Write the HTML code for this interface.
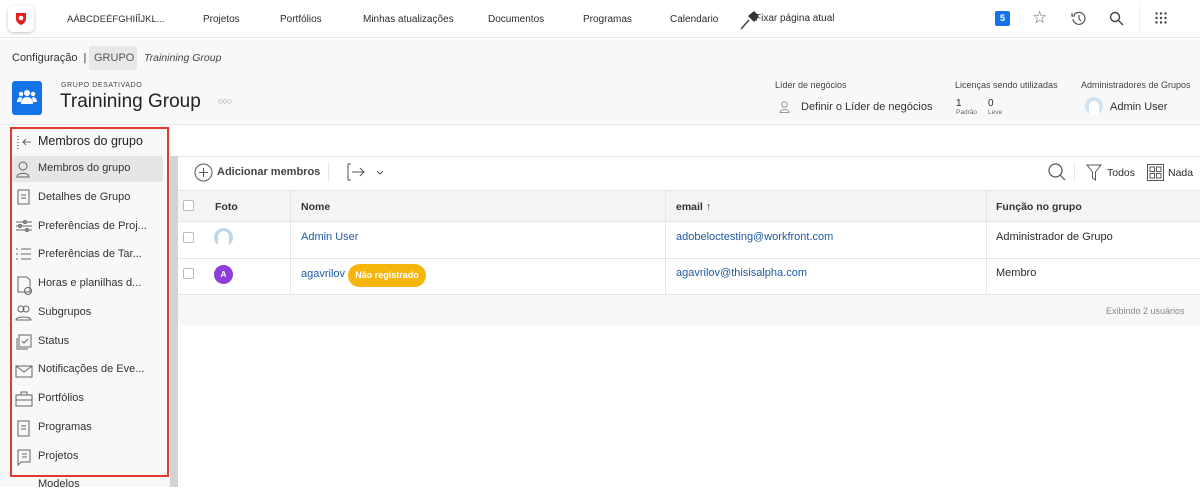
<!DOCTYPE html>
<html><head><meta charset="utf-8"><style>
*{box-sizing:border-box;margin:0;padding:0}
body{width:1200px;height:487px;overflow:hidden;background:#fff;font-family:"Liberation Sans",sans-serif;color:#2c2c2c;position:relative}
.a{position:absolute;white-space:nowrap}
.nav{top:0;left:0;width:1200px;height:38px;background:#fff;border-bottom:1px solid #e3e3e3}
.nav .t{font-size:10px;top:14px;color:#2c2c2c}
.hdr{top:39px;left:0;width:1200px;height:86px;background:#f8f8f8;border-bottom:1px solid #e6e6e6}
.side{top:126px;left:0;width:170px;height:361px;background:#f8f8f8}
.scroll{top:156px;left:170px;width:8px;height:331px;background:#d3d3d3}
.red{top:127px;left:10px;width:159px;height:350px;border:2px solid #e03a2e}
.mi{left:38px;font-size:11px;color:#333}
.ic{left:16px;width:16px;height:16px}
.th{font-size:10.5px;font-weight:bold;color:#333;top:201px}
.lnk{color:#1f5aa6;font-size:11px}
.cb{width:11px;height:11px;border:1px solid #bbb;border-radius:2px;background:#fff}
</style></head><body>
<div class="a nav"></div>
<div class="a" style="left:8px;top:6px;width:26px;height:26px;border-radius:5px;background:#fff;box-shadow:0 1px 3px rgba(0,0,0,.25)"></div>
<svg class="a" style="left:15px;top:12px" width="12" height="13" viewBox="0 0 12 13"><path d="M1 1h10v6c0 3-3 5-5 6C4 12 1 10 1 7z" fill="#e3201b"/><circle cx="6" cy="6" r="2.3" fill="#fff"/></svg>
<div class="a t nav" style="display:none"></div>
<div class="a" style="left:67px;top:14px;font-size:9.5px">AÁBCDEÉFGHIÍÎJKL...</div>
<div class="a" style="left:203px;top:14px;font-size:10px">Projetos</div>
<div class="a" style="left:280px;top:14px;font-size:10px">Portfólios</div>
<div class="a" style="left:363px;top:14px;font-size:10px">Minhas atualizações</div>
<div class="a" style="left:488px;top:14px;font-size:10px">Documentos</div>
<div class="a" style="left:583px;top:14px;font-size:10px">Programas</div>
<div class="a" style="left:670px;top:14px;font-size:10px">Calendario</div>
<svg class="a" style="left:740px;top:10px" width="20" height="20" viewBox="0 0 20 20"><path d="M1 19L9 10" stroke="#444" stroke-width="1.5"/><path d="M8 6l6-5 5 5-5 6z" fill="#333"/></svg>
<div class="a" style="left:755px;top:13px;font-size:10px">Fixar página atual</div>
<div class="a" style="left:995px;top:11px;width:15px;height:15px;background:#1473e6;color:#fff;font-size:9px;font-weight:bold;text-align:center;line-height:15px;border-radius:2px">5</div>
<div class="a" style="left:1032px;top:8px;font-size:17px;color:#666">☆</div>
<svg class="a" style="left:1071px;top:11px" width="16" height="16" viewBox="0 0 16 16" fill="none" stroke="#555" stroke-width="1.2"><path d="M3 4A6 6 0 1 1 2 8"/><path d="M8 4v4l2 2"/><path d="M1 2v3h3"/></svg>
<svg class="a" style="left:1109px;top:11px" width="15" height="15" viewBox="0 0 15 15" fill="none" stroke="#444" stroke-width="1.4"><circle cx="6" cy="6" r="4.5"/><path d="M9.5 9.5L14 14"/></svg>
<div class="a" style="left:1139px;top:6px;width:1px;height:26px;background:#eee"></div>
<svg class="a" style="left:1155px;top:12px" width="12" height="12"><g fill="#444"><circle cx="1.5" cy="1.5" r="1.2"/><circle cx="6" cy="1.5" r="1.2"/><circle cx="10.5" cy="1.5" r="1.2"/><circle cx="1.5" cy="6" r="1.2"/><circle cx="6" cy="6" r="1.2"/><circle cx="10.5" cy="6" r="1.2"/><circle cx="1.5" cy="10.5" r="1.2"/><circle cx="6" cy="10.5" r="1.2"/><circle cx="10.5" cy="10.5" r="1.2"/></g></svg>

<div class="a hdr"></div>
<div class="a" style="left:12px;top:52px;font-size:11px;color:#333">Configuração &nbsp;|</div>
<div class="a" style="left:89px;top:46px;width:48px;height:24px;background:#e8e8e8;border-radius:2px"></div>
<div class="a" style="left:94px;top:52px;font-size:11px;color:#555">GRUPO</div>
<div class="a" style="left:144px;top:52px;font-size:10.5px;font-style:italic;color:#444">Trainining Group</div>
<div class="a" style="left:12px;top:81px;width:30px;height:34px;background:#1473e6;border-radius:3px"></div>
<svg class="a" style="left:17px;top:89px" width="20" height="16" viewBox="0 0 20 16" fill="#fff"><circle cx="10" cy="4" r="3"/><circle cx="4" cy="5" r="2.2"/><circle cx="16" cy="5" r="2.2"/><path d="M4 15c0-5 3-7 6-7s6 2 6 7z"/><path d="M0 13c0-3 2-5 4-5l1 1-1 4z"/><path d="M20 13c0-3-2-5-4-5l-1 1 1 4z"/></svg>
<div class="a" style="left:61px;top:82px;font-size:7px;letter-spacing:.6px;color:#444">GRUPO DESATIVADO</div>
<div class="a" style="left:60px;top:91px;font-size:19px;color:#222">Trainining Group</div>
<div class="a" style="left:218px;top:96px;font-size:9px;color:#888;letter-spacing:-1px">○○○</div>
<div class="a" style="left:775px;top:80px;font-size:9px;color:#444">Líder de negócios</div>
<svg class="a" style="left:779px;top:101px" width="11" height="12" fill="none" stroke="#999"><circle cx="5.5" cy="3.5" r="2.8"/><path d="M1 11.5c0-4 9-4 9 0z"/></svg>
<div class="a" style="left:801px;top:101px;font-size:11px;color:#333">Definir o Líder de negócios</div>
<div class="a" style="left:955px;top:80px;font-size:9px;color:#444">Licenças sendo utilizadas</div>
<div class="a" style="left:956px;top:98px;font-size:10px">1</div>
<div class="a" style="left:988px;top:98px;font-size:10px">0</div>
<div class="a" style="left:956px;top:109px;font-size:6.5px;color:#666">Padrão</div>
<div class="a" style="left:988px;top:109px;font-size:6.5px;color:#666">Leve</div>
<div class="a" style="left:1081px;top:80px;font-size:9px;color:#444">Administradores de Grupos</div>
<div class="a" style="left:1085px;top:97px;width:18px;height:18px;border-radius:50%;background:#cfe3f3"></div>
<div class="a" style="left:1089px;top:101px;width:10px;height:14px;border-radius:5px 5px 0 0;background:#fff"></div>
<div class="a" style="left:1110px;top:101px;font-size:11px;color:#333">Admin User</div>

<div class="a side"></div>
<div class="a scroll"></div>
<div class="a" style="left:178px;top:156px;width:1022px;height:1px;background:#e6e6e6"></div>
<svg class="a" style="left:16px;top:135px" width="16" height="14" fill="none" stroke="#666"><path d="M2 1v1M2 4v1M2 7v1M2 10v1M2 13v1" stroke-width="1.3"/><path d="M15 7H7M10 4L7 7l3 3"/></svg>
<div class="a" style="left:38px;top:134px;font-size:12.5px;color:#222">Membros do grupo</div>
<div class="a" style="left:12px;top:156px;width:151px;height:26px;background:#e6e6e6;border-radius:3px"></div>
<div class="a mi" style="top:162px">Membros do grupo</div>
<div class="a mi" style="top:191px">Detalhes de Grupo</div>
<div class="a mi" style="top:220px">Preferências de Proj...</div>
<div class="a mi" style="top:248px">Preferências de Tar...</div>
<div class="a mi" style="top:277px">Horas e planilhas d...</div>
<div class="a mi" style="top:306px">Subgrupos</div>
<div class="a mi" style="top:335px">Status</div>
<div class="a mi" style="top:363px">Notificações de Eve...</div>
<div class="a mi" style="top:392px">Portfólios</div>
<div class="a mi" style="top:421px">Programas</div>
<div class="a mi" style="top:450px">Projetos</div>
<div class="a mi" style="top:478px">Modelos</div>
<svg class="a" style="left:15px;top:160px" width="18" height="310" fill="none" stroke="#666" stroke-width="1">
<circle cx="8" cy="6" r="4"/><path d="M2 17c0-5 12-5 12 0z"/>
<rect x="3" y="30" width="11" height="14"/><path d="M6 35h5M6 38h5"/>
<path d="M1 62h16M1 66h16M1 70h16"/><circle cx="10" cy="62" r="1.5"/><circle cx="5" cy="66" r="1.5"/><circle cx="12" cy="70" r="1.5"/>
<path d="M1 89h2M1 94h2M1 99h2M6 89h10M6 94h10M6 99h10"/>
<path d="M3 117h9l3 3v12H3z"/><circle cx="13" cy="131" r="3.5"/>
<circle cx="6" cy="149" r="3"/><circle cx="11" cy="149" r="3"/><path d="M1 160c0-4 15-4 15 0z"/>
<rect x="4" y="175" width="12" height="12"/><path d="M2 178v11h11M7 181l2 2 4-4"/>
<rect x="1" y="206" width="16" height="11"/><path d="M1 206l8 6 8-6"/>
<rect x="1" y="235" width="16" height="11"/><path d="M6 235v-3h6v3M1 240h16"/>
<rect x="3" y="261" width="11" height="15"/><path d="M6 266h5M6 269h5"/>
<path d="M3 290h12v12H6l-3 3z"/><path d="M7 294h5M7 297h5"/>
</svg>
<div class="a red"></div>

<svg class="a" style="left:194px;top:163px" width="19" height="19" fill="none" stroke="#555"><circle cx="9.5" cy="9.5" r="8.5"/><path d="M9.5 5v9M5 9.5h9"/></svg>
<div class="a" style="left:217px;top:166px;font-size:11px;font-weight:bold;color:#444">Adicionar membros</div>
<div class="a" style="left:328px;top:162px;width:1px;height:20px;background:#e6e6e6"></div>
<svg class="a" style="left:347px;top:163px" width="40" height="18" fill="none" stroke="#555"><path d="M4 1H1v16h3M5 9h12M13 5l4 4-4 4"/><path d="M30 8l3 3 3-3"/></svg>
<svg class="a" style="left:1048px;top:163px" width="18" height="18" fill="none" stroke="#555" stroke-width="1.2"><circle cx="7.5" cy="7.5" r="6.5"/><path d="M12 12l5 5"/></svg>
<div class="a" style="left:1074px;top:162px;width:1px;height:20px;background:#e6e6e6"></div>
<svg class="a" style="left:1086px;top:164px" width="16" height="17" fill="none" stroke="#555"><path d="M1 1h14L9.5 8v8l-3-2V8z"/></svg>
<div class="a" style="left:1107px;top:167px;font-size:10.5px">Todos</div>
<svg class="a" style="left:1147px;top:164px" width="17" height="17" fill="none" stroke="#555"><rect x=".5" y=".5" width="16" height="16"/><rect x="3" y="3" width="4.5" height="4.5"/><rect x="9.5" y="3" width="4.5" height="4.5"/><rect x="3" y="9.5" width="4.5" height="4.5"/><rect x="9.5" y="9.5" width="4.5" height="4.5"/></svg>
<div class="a" style="left:1168px;top:167px;font-size:10.5px">Nada</div>

<div class="a" style="left:178px;top:190px;width:1022px;height:32px;background:#f4f4f4;border-top:1px solid #e6e6e6;border-bottom:1px solid #e6e6e6"></div>
<div class="a cb" style="left:183px;top:200px"></div>
<div class="a th" style="left:215px">Foto</div>
<div class="a th" style="left:301px">Nome</div>
<div class="a th" style="left:676px">email ↑</div>
<div class="a th" style="left:996px">Função no grupo</div>
<div class="a" style="left:290px;top:190px;width:1px;height:104px;background:#e6e6e6"></div>
<div class="a" style="left:665px;top:190px;width:1px;height:104px;background:#e6e6e6"></div>
<div class="a" style="left:986px;top:190px;width:1px;height:104px;background:#e6e6e6"></div>
<div class="a" style="left:178px;top:258px;width:1022px;height:1px;background:#e6e6e6"></div>
<div class="a" style="left:178px;top:294px;width:1022px;height:31px;background:#f7f7f7;border-top:1px solid #e6e6e6"></div>
<div class="a cb" style="left:183px;top:232px"></div>
<div class="a" style="left:214px;top:228px;width:19px;height:19px;border-radius:50%;background:#bcd6ea"></div>
<div class="a" style="left:218px;top:231px;width:11px;height:16px;border-radius:6px 6px 0 0;background:#fff"></div>
<div class="a lnk" style="left:301px;top:231px">Admin User</div>
<div class="a lnk" style="left:676px;top:231px">adobeloctesting@workfront.com</div>
<div class="a" style="left:996px;top:231px;font-size:11px">Administrador de Grupo</div>
<div class="a cb" style="left:183px;top:268px"></div>
<div class="a" style="left:214px;top:265px;width:19px;height:19px;border-radius:50%;background:#8c3fd6;color:#fff;font-size:8px;font-weight:bold;text-align:center;line-height:19px">A</div>
<div class="a lnk" style="left:301px;top:268px">agavrilov</div>
<div class="a" style="left:348px;top:264px;width:78px;height:23px;border-radius:12px;background:#f5b50a;color:#fff;font-size:9px;font-weight:bold;text-align:center;line-height:23px">Não registrado</div>
<div class="a lnk" style="left:676px;top:267px">agavrilov@thisisalpha.com</div>
<div class="a" style="left:996px;top:267px;font-size:11px">Membro</div>
<div class="a" style="left:1106px;top:306px;font-size:9px;color:#888">Exibindo 2 usuários</div>
</body></html>
